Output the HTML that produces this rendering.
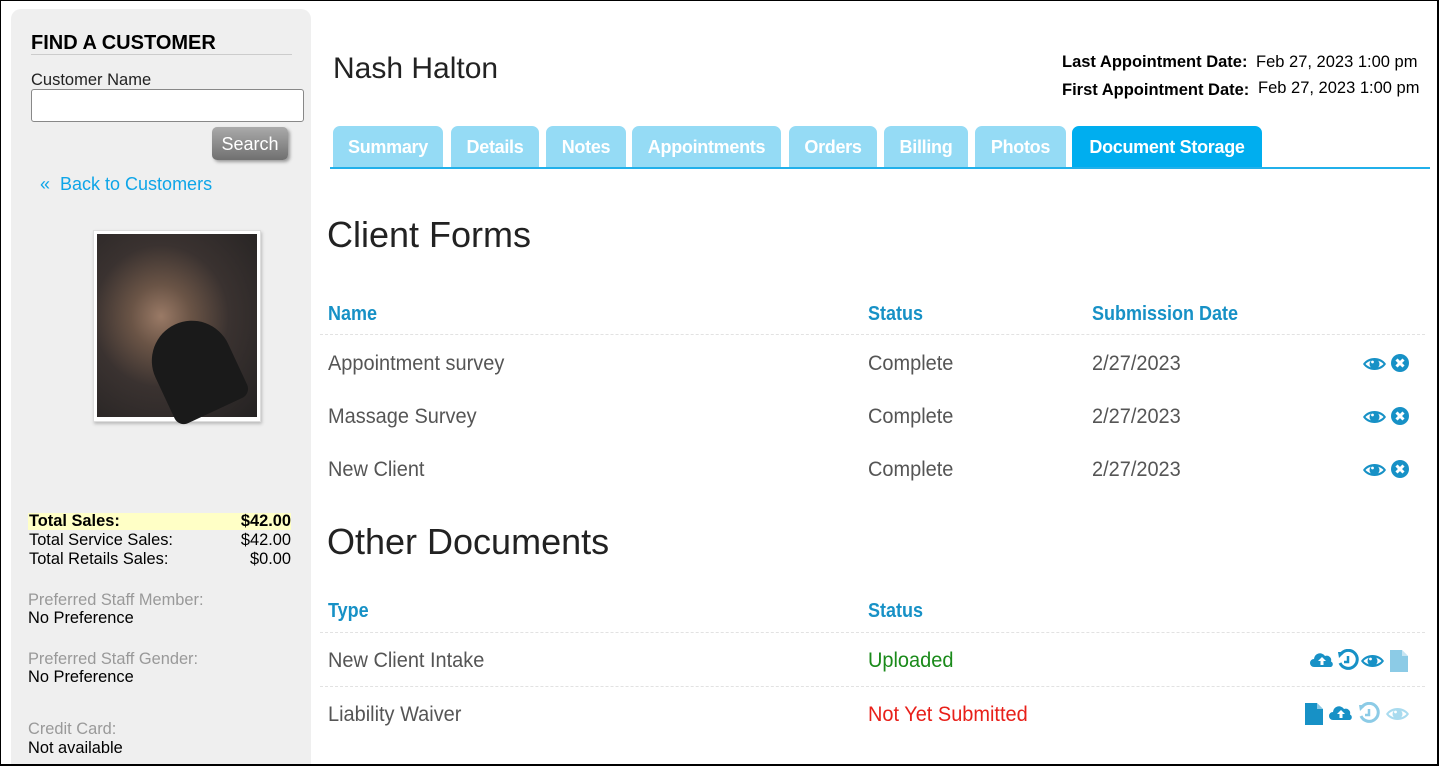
<!DOCTYPE html>
<html><head><meta charset="utf-8"><style>
*{box-sizing:border-box;margin:0;padding:0}
html,body{width:1439px;height:766px;overflow:hidden}
body{background:#fff;font-family:"Liberation Sans",sans-serif;position:relative}
.frame{position:absolute;left:0;top:0;width:1439px;height:766px;border:1px solid #000;border-right-width:2px;border-bottom-width:2px;pointer-events:none;z-index:5}
.side{position:absolute;left:11px;top:9px;width:300px;height:757px;background:#efefef;border-radius:10px 10px 0 0}
.a{position:absolute;white-space:nowrap}
.tab{position:absolute;top:126px;height:42px;background:#95dbf5;color:#fff;font-weight:bold;font-size:18px;border-radius:7px 7px 0 0;text-align:center;line-height:42px;letter-spacing:-0.3px}
.c{font-size:21px;color:#555;transform:scaleX(.95);transform-origin:0 0}
.h{font-size:20px;color:#1791c6;font-weight:bold;transform:scaleX(.9);transform-origin:0 0}
.dl{position:absolute;left:320px;width:1105px;border-top:1px dashed #e2e2e2}
.s{font-size:16.4px}
</style></head><body>
<div class="frame"></div>
<div class="side"></div>
<div class="a" style="left:31px;top:32px;font-size:20px;font-weight:bold;color:#000">FIND A CUSTOMER</div>
<div class="a" style="left:31px;top:54px;width:261px;border-top:1px solid #ccc"></div>
<div class="a" style="left:31px;top:71px;font-size:16.5px;color:#222">Customer Name</div>
<div class="a" style="left:31px;top:89px;width:273px;height:33px;background:#fff;border:1px solid #888;border-radius:3px"></div>
<div class="a" style="left:212px;top:127px;width:76px;height:33px;border-radius:5px;background:linear-gradient(#aaa,#707070);color:#fff;font-size:18px;text-align:center;line-height:35px;box-shadow:2px 2px 3px #999">Search</div>
<div class="a" style="left:40px;top:174px;font-size:18px;color:#0ea5e8">«&nbsp; Back to Customers</div>
<div class="a" style="left:93px;top:230px;width:168px;height:192px;background:#fff;border:1px solid #ddd;box-shadow:1px 2px 3px #bbb"></div>
<div class="a" style="left:97px;top:234px;width:160px;height:183px;background:radial-gradient(ellipse at 40% 45%,#9a7a66 0,#6a5446 22%,#3a3230 50%,#242222 100%)"></div>
<div class="a" style="left:155px;top:320px;width:80px;height:95px;border-radius:40px 40px 10px 10px;background:#1a1a1a;transform:rotate(-25deg)"></div>
<div class="a" style="left:28px;top:513px;width:263px;height:17px;background:#ffffc6"></div>
<div class="a s" style="left:29px;top:512px;font-weight:bold">Total Sales:</div>
<div class="a s" style="right:1148px;top:512px;font-weight:bold">$42.00</div>
<div class="a s" style="left:29px;top:531px">Total Service Sales:</div>
<div class="a s" style="right:1148px;top:531px">$42.00</div>
<div class="a s" style="left:29px;top:550px">Total Retails Sales:</div>
<div class="a s" style="right:1148px;top:550px">$0.00</div>
<div class="a s" style="left:28px;top:591px;color:#999">Preferred Staff Member:</div>
<div class="a s" style="left:28px;top:609px">No Preference</div>
<div class="a s" style="left:28px;top:650px;color:#999">Preferred Staff Gender:</div>
<div class="a s" style="left:28px;top:668px">No Preference</div>
<div class="a s" style="left:28px;top:720px;color:#999">Credit Card:</div>
<div class="a s" style="left:28px;top:739px">Not available</div>

<div class="a" style="left:333px;top:52px;font-size:30px;color:#222">Nash Halton</div>
<div class="a" style="left:1062px;top:53px;font-size:16.5px;font-weight:bold">Last Appointment Date:</div>
<div class="a" style="left:1256px;top:53px;font-size:16.5px">Feb 27, 2023 1:00 pm</div>
<div class="a" style="left:1062px;top:81px;font-size:16.5px;font-weight:bold">First Appointment Date:</div>
<div class="a" style="left:1258px;top:79px;font-size:16.5px">Feb 27, 2023 1:00 pm</div>

<div class="tab" style="left:333px;width:110px">Summary</div>
<div class="tab" style="left:451px;width:88px">Details</div>
<div class="tab" style="left:546px;width:80px">Notes</div>
<div class="tab" style="left:632px;width:149px">Appointments</div>
<div class="tab" style="left:789px;width:88px">Orders</div>
<div class="tab" style="left:884px;width:84px">Billing</div>
<div class="tab" style="left:975px;width:91px">Photos</div>
<div class="tab" style="left:1072px;width:190px;background:#00aeef">Document Storage</div>
<div class="a" style="left:330px;top:167px;width:1100px;border-top:2px solid #21b0ea"></div>

<div class="a" style="left:327px;top:214px;font-size:36px;color:#222">Client Forms</div>
<div class="a h" style="left:328px;top:303px">Name</div>
<div class="a h" style="left:868px;top:303px">Status</div>
<div class="a h" style="left:1092px;top:303px">Submission Date</div>
<div class="dl" style="top:334px"></div>
<div class="a c" style="left:328px;top:352px">Appointment survey</div>
<div class="a c" style="left:868px;top:352px">Complete</div>
<div class="a c" style="left:1092px;top:352px">2/27/2023</div>
<div class="a c" style="left:328px;top:405px">Massage Survey</div>
<div class="a c" style="left:868px;top:405px">Complete</div>
<div class="a c" style="left:1092px;top:405px">2/27/2023</div>
<div class="a c" style="left:328px;top:458px">New Client</div>
<div class="a c" style="left:868px;top:458px">Complete</div>
<div class="a c" style="left:1092px;top:458px">2/27/2023</div>

<svg width="0" height="0" style="position:absolute"><defs>
<g id="eye"><path d="M0 8C5 0 18 0 23 8C18 16 5 16 0 8Z" fill="currentColor"/><path d="M2.5 8C7 3 16 3 20.5 8C16 13 7 13 2.5 8Z" fill="#fff"/><circle cx="11.5" cy="8" r="5" fill="currentColor"/><circle cx="9.5" cy="6" r="1.4" fill="#fff"/></g>
<g id="x"><circle cx="9" cy="9" r="9" fill="currentColor"/><path d="M5.5 5.5L12.5 12.5M12.5 5.5L5.5 12.5" stroke="#fff" stroke-width="3"/></g>
<g id="cloud"><path d="M4 18a4 4 0 0 1 0-8a6 6 0 0 1 11-3a4.5 4.5 0 0 1 6 5.5a3 3 0 0 1 0 5.5Z" fill="currentColor"/><path d="M12 8L8 12h2.5v4h3v-4H16Z" fill="#fff"/></g>
<g id="hist"><path d="M4 4a9 9 0 1 1-1 9" fill="none" stroke="currentColor" stroke-width="3"/><path d="M1 2L8 2L2 8Z" fill="currentColor"/><path d="M11 6v6h-4" fill="none" stroke="currentColor" stroke-width="2.5"/></g>
<g id="doc"><path d="M0 0h12l6 6v16H0Z" fill="currentColor"/><path d="M12 0v6h6" fill="#fff" opacity=".5"/></g>
</defs></svg>

<svg class="a" style="left:1363px;top:354px;color:#1791c6" width="50" height="20"><use href="#eye" y="2"/><use href="#x" x="28"/></svg>
<svg class="a" style="left:1363px;top:407px;color:#1791c6" width="50" height="20"><use href="#eye" y="2"/><use href="#x" x="28"/></svg>
<svg class="a" style="left:1363px;top:460px;color:#1791c6" width="50" height="20"><use href="#eye" y="2"/><use href="#x" x="28"/></svg>

<div class="a" style="left:327px;top:521px;font-size:36px;color:#222">Other Documents</div>
<div class="a h" style="left:328px;top:600px">Type</div>
<div class="a h" style="left:868px;top:600px">Status</div>
<div class="dl" style="top:632px"></div>
<div class="a c" style="left:328px;top:649px">New Client Intake</div>
<div class="a c" style="left:868px;top:649px;color:#1a8a1a">Uploaded</div>
<div class="dl" style="top:686px"></div>
<div class="a c" style="left:328px;top:703px">Liability Waiver</div>
<div class="a c" style="left:868px;top:703px;color:#e8201a">Not Yet Submitted</div>

<svg class="a" style="left:1310px;top:649px" width="102" height="24">
<use href="#cloud" style="color:#1791c6"/><use href="#hist" x="27" y="1" style="color:#1791c6"/><use href="#eye" x="51" y="4" style="color:#1791c6"/><use href="#doc" x="80" y="1" style="color:#8ccbe6"/></svg>
<svg class="a" style="left:1305px;top:702px" width="108" height="24">
<use href="#doc" y="1" style="color:#1791c6"/><use href="#cloud" x="24" style="color:#1791c6"/><use href="#hist" x="53" y="1" style="color:#8ccbe6"/><use href="#eye" x="81" y="4" style="color:#a9dbef"/></svg>
</body></html>
